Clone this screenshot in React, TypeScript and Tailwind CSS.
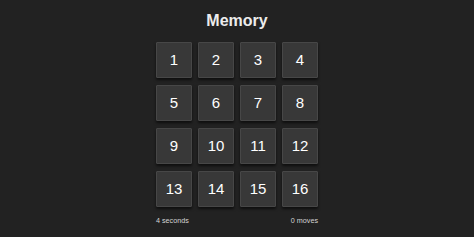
import React from 'react';

const tiles = Array.from({ length: 16 }, (_, i) => i + 1);

export default function App() {
  return (
    <main
      className="min-h-[237px] w-full bg-[#222222] text-[#ececec] flex flex-col items-center"
      style={{ fontFamily: '"Liberation Sans", Arial, sans-serif' }}
    >
      <h1 className="mt-[11px] h-[19px] text-[16px] leading-[19px] font-bold">Memory</h1>
      <div className="mt-[12px] grid grid-cols-[repeat(4,36px)] gap-x-[6px] gap-y-[7px]">
        {tiles.map((n) => (
          <button
            key={n}
            className="h-[36px] w-[36px] flex items-center justify-center rounded-[1px] border border-[#474747] bg-[#383838] text-[15px] text-white shadow-[0_2px_3px_rgba(0,0,0,0.6)]"
          >
            {n}
          </button>
        ))}
      </div>
      <div className="mt-[9px] w-[162px] flex justify-between text-[7.2px] leading-[10px] text-[#d4d4d4]">
        <span>4 seconds</span>
        <span>0 moves</span>
      </div>
    </main>
  );
}
